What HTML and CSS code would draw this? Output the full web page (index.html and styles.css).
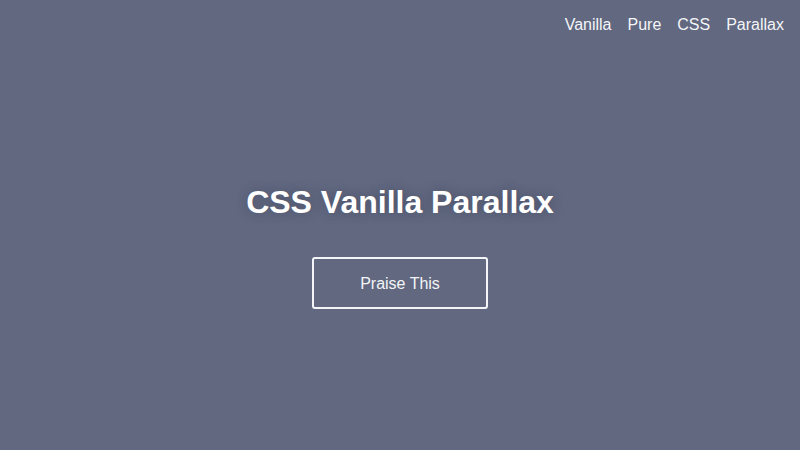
FILE: index.html
```html
<!DOCTYPE html>
<html lang="en">
<head>
    <meta charset="UTF-8">
    <meta name="viewport" content="width=device-width, initial-scale=1.0">
    <title>CSS Vanilla Parallax</title>
    <link rel="stylesheet" href="styles.css">
</head>
<body>
    <div class="header">
        <nav class="nav">
            <a href="#">Vanilla</a>
            <a href="#">Pure</a>
            <a href="#">CSS</a>
            <a href="#">Parallax</a>
        </nav>
    </div>
    <div class="hero">
        <h1>CSS Vanilla Parallax</h1>
        <button class="praise">Praise This</button>
    </div>
</body>
</html>
```

FILE: styles.css
```css
html, body {
    margin: 0;
    height: 100%;
}
body {
    background-color: #616880;
    color: #ffffff;
    font-family: "Liberation Sans", Arial, sans-serif;
    display: flex;
    flex-direction: column;
    overflow: hidden;
}
.header {
    display: flex;
    justify-content: flex-end;
    padding: 14px 16px 0 0;
}
.nav {
    display: flex;
    gap: 16px;
}
.nav a {
    color: #f4f5f8;
    text-decoration: none;
    font-size: 16px;
    line-height: 22px;
}
.hero {
    flex: 1;
    display: flex;
    flex-direction: column;
    align-items: center;
    padding-top: 148px;
}
h1 {
    margin: 0;
    font-size: 32px;
    line-height: 36px;
    text-shadow: 0 0 12px rgba(40, 45, 65, 0.4);
}
.praise {
    margin-top: 37px;
    width: 176px;
    height: 52px;
    background: transparent;
    color: #f4f5f8;
    border: 2px solid #f4f5f8;
    border-radius: 3px;
    font-family: inherit;
    font-size: 16px;
    padding-top: 2px;
    cursor: pointer;
}
```
